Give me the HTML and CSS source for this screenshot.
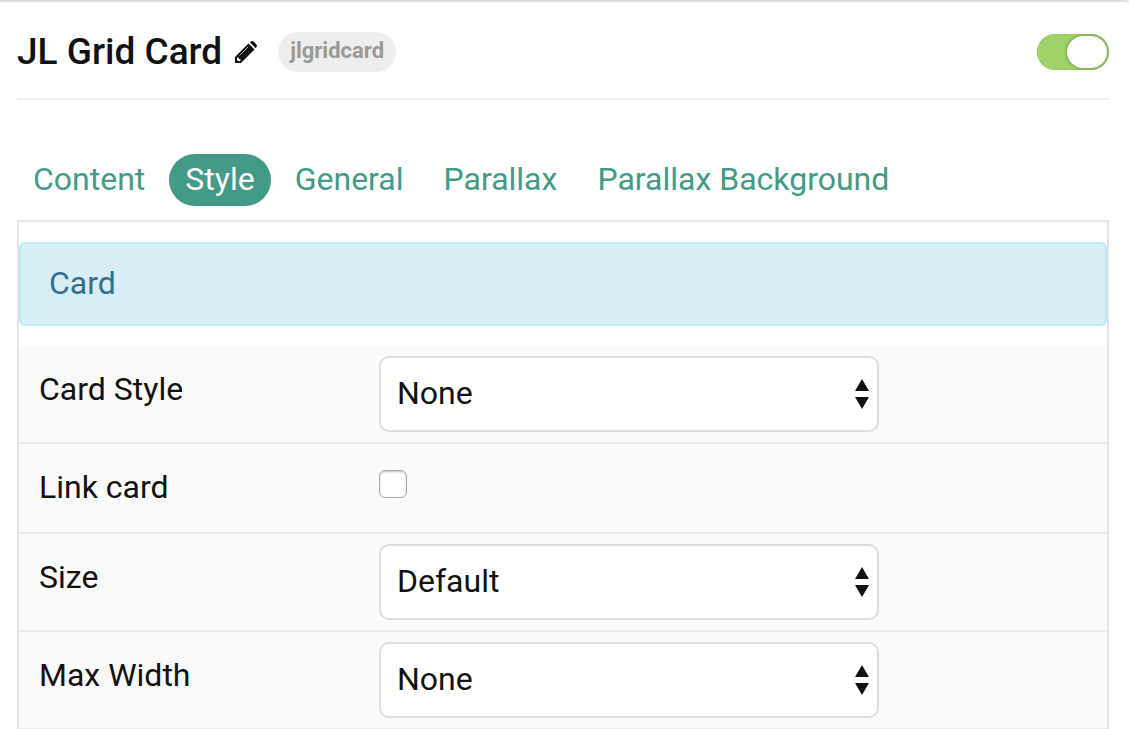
FILE: index.html
```html
<!doctype html>
<html lang="en">
  <head>
    <meta charset="UTF-8" />
    <meta name="viewport" content="width=device-width, initial-scale=1.0" />
    <title>JL Grid Card</title>
    <link rel="stylesheet" href="styles.css">
  </head>
  <body>
    <div class="modal">
      <header class="modal-header">
        <h1>JL Grid Card</h1>
        <button type="button" class="edit-btn" aria-label="Rename">
          <svg width="24" height="24" viewBox="0 0 24 24">
            <path fill="#111" d="M1 23V17L14.5 3.5L20.5 9.5L7 23Z" />
            <path fill="#111" d="M15.8 2.2L17.2 1.2Q18.4 .6 19.6 1.6L22.4 4.4Q23.4 5.6 22.6 6.8L21.8 8.2Z" />
            <path fill="none" stroke="#bbb" stroke-width="1" d="M5.5 15.5L14 7" />
            <path fill="#fff" d="M3 18L4.5 17.2L5 19L6.8 19.5L6 21.2H4.5L3 19.8Z" />
          </svg>
        </button>
        <span class="badge">jlgridcard</span>
        <input type="checkbox" class="switch" aria-label="Enabled" checked />
      </header>

      <nav class="tabs">
        <a href="#content">Content</a>
        <a href="#style" class="active">Style</a>
        <a href="#general">General</a>
        <a href="#parallax">Parallax</a>
        <a href="#parallax-bg">Parallax Background</a>
      </nav>

      <form class="panel">
        <div class="alert">Card</div>
        <div class="form-row">
          <label for="card-style">Card Style</label>
          <div class="select">
            <select id="card-style"><option>None</option></select>
            <svg width="16" height="30" viewBox="0 0 16 30"><path d="M8 0L15 12H1ZM8 30L15 18H1Z" /></svg>
          </div>
        </div>
        <div class="form-row form-row-check">
          <label for="link-card">Link card</label>
          <input type="checkbox" id="link-card" class="check" />
        </div>
        <div class="form-row">
          <label for="size">Size</label>
          <div class="select">
            <select id="size"><option>Default</option></select>
            <svg width="16" height="30" viewBox="0 0 16 30"><path d="M8 0L15 12H1ZM8 30L15 18H1Z" /></svg>
          </div>
        </div>
        <div class="form-row">
          <label for="max-width">Max Width</label>
          <div class="select">
            <select id="max-width"><option>None</option></select>
            <svg width="16" height="30" viewBox="0 0 16 30"><path d="M8 0L15 12H1ZM8 30L15 18H1Z" /></svg>
          </div>
        </div>
      </form>
    </div>
  </body>
</html>
```
FILE: styles.css
```css
* {
  box-sizing: border-box;
}
body {
  margin: 0;
  background: #fff;
  color: #111;
  font-family: Roboto, sans-serif;
  font-size: 32px;
  line-height: 40px;
}
.modal {
  height: 100vh;
  overflow: hidden;
  padding: 0 20px 0 17px;
  border-top: 2px solid #ddd;
  border-top-right-radius: 4px;
}

/* Header */
.modal-header {
  display: flex;
  align-items: center;
  height: 98px;
  padding-top: 4px;
  border-bottom: 2px solid #eee;
}
h1 {
  margin: 0;
  font-size: 37px;
  font-weight: 500;
}
.edit-btn {
  display: flex;
  margin: 0 20px 0 12px;
  padding: 0;
  border: none;
  background: none;
  cursor: pointer;
}
.badge {
  height: 40px;
  padding: 0 12px;
  border-radius: 20px;
  background: #eee;
  color: #999;
  font-size: 22px;
  font-weight: 700;
  line-height: 38px;
}
.switch {
  appearance: none;
  display: flex;
  justify-content: flex-end;
  width: 72px;
  height: 36px;
  margin: 0 0 0 auto;
  padding: 2px;
  border-radius: 18px;
  background: #a0d468;
  box-shadow: inset 0 0 1px rgba(0, 0, 0, 0.25);
  cursor: pointer;
}
.switch::before {
  content: "";
  width: 40px;
  height: 32px;
  border-radius: 16px;
  background: #fff;
  box-shadow: 0 0 4px rgba(0, 0, 0, 0.4);
}
.switch:not(:checked) {
  justify-content: flex-start;
  background: #ddd;
}

/* Tabs */
.tabs {
  display: flex;
  gap: 8px;
  padding: 54px 0 14px;
}
.tabs a {
  height: 52px;
  padding: 0 16px;
  border-radius: 26px;
  color: #439a86;
  line-height: 50px;
  text-decoration: none;
  white-space: nowrap;
}
.tabs a.active {
  background: #439a86;
  color: #fff;
}

/* Fields */
.panel {
  padding-top: 20px;
  border: 2px solid #e5e5e5;
}
.alert {
  margin-bottom: 20px;
  padding: 19px 28px 21px;
  border: 2px solid #bce8f1;
  border-radius: 6px;
  background: #d9edf7;
  color: #31708f;
}
.form-row {
  display: flex;
  align-items: flex-start;
  padding: 10px 20px;
  border-bottom: 2px solid #ebebeb;
  background: #fafafa;
}
.form-row label {
  width: 340px;
  padding: 13px 0;
}
.form-row-check {
  padding: 10px 20px 12px;
}
.select {
  position: relative;
  width: 500px;
}
.select select {
  appearance: none;
  display: block;
  width: 100%;
  height: 76px;
  padding: 0 48px 2px 16px;
  border: 2px solid #ddd;
  border-radius: 10px;
  background: #fff;
  color: #111;
  font: inherit;
}
.select svg {
  position: absolute;
  top: 23px;
  right: 9px;
  fill: #111;
  pointer-events: none;
}
.check {
  appearance: none;
  width: 28px;
  height: 28px;
  margin: 16px 0 0;
  border: 1px solid #aaa;
  border-radius: 6px;
  background: #fff;
  box-shadow: inset 0 1px 2px rgba(0, 0, 0, 0.25);
}
.check:checked {
  background: #439a86;
}
```
